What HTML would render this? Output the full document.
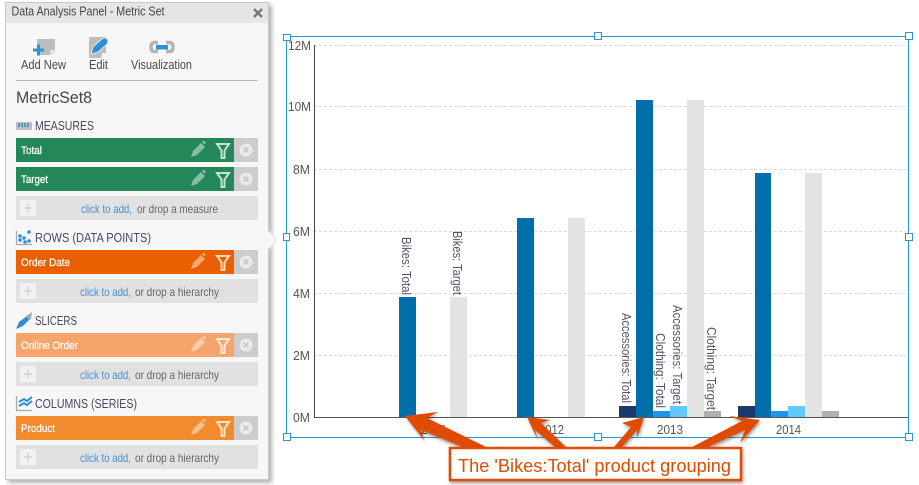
<!DOCTYPE html>
<html><head><meta charset="utf-8"><style>
html,body{margin:0;padding:0;background:#fff;width:919px;height:485px;overflow:hidden}
svg{display:block;position:absolute;left:0;top:0}
text{font-family:"Liberation Sans",sans-serif;font-size:12px;fill:#4a4a4a}
.r{font-size:11px;fill:#fff;stroke:#fff;stroke-width:.25px}
.b{fill:#4b8fcf;font-size:12px}
.g{fill:#666;font-size:12px}
.h{font-size:12.5px;fill:#484860}
.a{fill:#555;font-size:13px}
.l{fill:#555;font-size:12.5px}
.v{fill:#5a5068;font-size:12.5px}
</style></head><body>
<svg width="919" height="485" viewBox="0 0 919 485">
<defs>
<filter id="s" x="-10%" y="-10%" width="120%" height="120%"><feDropShadow dx="3" dy="3" stdDeviation="2" flood-color="#000" flood-opacity=".3"/></filter>
<filter id="s2" x="-10%" y="-20%" width="120%" height="140%"><feDropShadow dx="1" dy="2" stdDeviation="1.5" flood-color="#000" flood-opacity=".4"/></filter>
<g id="tools">
<path d="M191 157l2-6 8-8 4 4-8 8z" fill="#fff" fill-opacity=".45"/>
<path d="M202 142l1-1q1-.5 2 .5t.5 2l-1 1z" fill="#fff" fill-opacity=".45"/>
<path d="M217 144h12l-4.500 6.500v7.500h-3v-7.500z" fill="none" stroke="#fff" stroke-opacity=".75" stroke-width="2"/>
<rect x="234" y="138" width="24" height="24" fill="#ccc"/>
<circle cx="246" cy="150" r="6.500" fill="#e9e9e9"/>
<path d="M243.500 147.500l5 5m0-5l-5 5" stroke="#c4c4c4" stroke-width="1.300"/>
</g>
<g id="addrow">
<rect x="16" y="196" width="242" height="24" fill="#e1e1e1"/>
<rect x="20" y="200" width="16" height="16" fill="#f1f1f1"/>
<path d="M28 203.500v9m-4.500-4.500h9" stroke="#c8c8c8" stroke-width="1"/>
</g>
</defs>

<!-- Chart -->
<g stroke="#dcdcdc" stroke-width="1" stroke-dasharray="3 2">
<path d="M314 45.500H906M314 106.500H906M314 169.500H906M314 231.500H906M314 293.500H906M314 355.500H906"/>
</g>
<rect x="314" y="45" width="1" height="372" fill="#444"/>
<rect x="314" y="417" width="594" height="1" fill="#555"/>
<g>
<text class="a" lengthAdjust="spacingAndGlyphs" x="288" y="50" textLength="23">12M</text>
<text class="a" lengthAdjust="spacingAndGlyphs" x="288" y="111" textLength="23">10M</text>
<text class="a" lengthAdjust="spacingAndGlyphs" x="293" y="174" textLength="17">8M</text>
<text class="a" lengthAdjust="spacingAndGlyphs" x="293" y="236" textLength="17">6M</text>
<text class="a" lengthAdjust="spacingAndGlyphs" x="293" y="298" textLength="17">4M</text>
<text class="a" lengthAdjust="spacingAndGlyphs" x="293" y="360" textLength="17">2M</text>
<text class="a" lengthAdjust="spacingAndGlyphs" x="293" y="422" textLength="17">0M</text>
</g>
<g fill="#e3e3e3">
<rect x="450" y="297" width="17" height="120"/><rect x="568" y="218" width="17" height="199"/>
<rect x="687" y="100" width="17" height="317"/><rect x="805" y="173" width="17" height="244"/>
</g>
<g fill="#006eab">
<rect x="399" y="297" width="17" height="120"/><rect x="517" y="218" width="17" height="199"/>
<rect x="636" y="100" width="17" height="317"/><rect x="755" y="173" width="16" height="244"/>
</g>
<g fill="#1b3a6b"><rect x="619" y="406" width="17" height="11"/><rect x="738" y="406" width="17" height="11"/></g>
<g fill="#1a98ee"><rect x="653" y="411" width="17" height="6"/><rect x="771" y="411" width="17" height="6"/></g>
<g fill="#61c9ff"><rect x="670" y="406" width="17" height="11"/><rect x="788" y="406" width="17" height="11"/></g>
<g fill="#b0b0b0"><rect x="704" y="411" width="17" height="6"/><rect x="822" y="411" width="17" height="6"/></g>
<text class="l" lengthAdjust="spacingAndGlyphs" x="421" y="434" textLength="26">2011</text>
<text class="l" lengthAdjust="spacingAndGlyphs" x="539" y="434" textLength="25">2012</text>
<text class="l" lengthAdjust="spacingAndGlyphs" x="657" y="434" textLength="26">2013</text>
<text class="l" lengthAdjust="spacingAndGlyphs" x="776" y="434" textLength="25">2014</text>
<text class="v" lengthAdjust="spacingAndGlyphs" transform="translate(402,237) rotate(90)" textLength="58">Bikes: Total</text>
<text class="v" lengthAdjust="spacingAndGlyphs" transform="translate(453,231) rotate(90)" textLength="64">Bikes: Target</text>
<text class="v" lengthAdjust="spacingAndGlyphs" transform="translate(622,313) rotate(90)" textLength="90">Accessories: Total</text>
<text class="v" lengthAdjust="spacingAndGlyphs" transform="translate(656,333) rotate(90)" textLength="75">Clothing: Total</text>
<text class="v" lengthAdjust="spacingAndGlyphs" transform="translate(673,305) rotate(90)" textLength="99">Accessories: Target</text>
<text class="v" lengthAdjust="spacingAndGlyphs" transform="translate(707,327) rotate(90)" textLength="83">Clothing: Target</text>

<!-- Selection -->
<rect x="286.500" y="36.500" width="622" height="401" fill="none" stroke="#2a95d5" stroke-width="1"/>
<g fill="#fff" stroke="#2a95d5" stroke-width="1">
<rect x="283.500" y="34.500" width="7" height="6"/><rect x="594.500" y="32.500" width="7" height="7"/><rect x="905.500" y="32.500" width="7" height="7"/>
<rect x="283.500" y="233.500" width="6" height="7"/><rect x="905.500" y="233.500" width="7" height="7"/>
<rect x="283.500" y="433.500" width="7" height="7"/><rect x="594.500" y="433.500" width="7" height="7"/><rect x="905.500" y="433.500" width="7" height="7"/>
</g>

<!-- Panel -->
<rect x="5.500" y="2.500" width="263" height="477" fill="#f7f7f7" stroke="#c8c8c8" stroke-width="1" filter="url(#s)"/>
<path d="M268 231l9 9-9 9z" fill="#f7f7f7"/>
<path d="M269 231l8 9-8 9" fill="none" stroke="#e4e4e4"/>
<rect x="6" y="3" width="262" height="20" fill="#e6e6e6"/>
<text lengthAdjust="spacingAndGlyphs" x="11.500" y="15.500" textLength="153" style="font-size:12.5px;fill:#444">Data Analysis Panel - Metric Set</text>
<path d="M254 9l8 8m0-8l-8 8" stroke="#777" stroke-width="2.400"/>

<!-- toolbar icons -->
<path d="M37 39h18v12l-4 4H37z" fill="#bdbdbd"/><path d="M50 55l1-5h4z" fill="#f0f0f0"/>
<path d="M38.500 44.500v11m-5.500-5.500h11" stroke="#2a95d5" stroke-width="3"/>
<path d="M89 37h17v16l-5 5H89z" fill="#bdbdbd"/><path d="M101 58l1-5h4z" fill="#f0f0f0"/>
<path d="M91 54l2-7 9-8q3-2 5 0t0 5l-9 8z" fill="#2a8ed8" stroke="#f7f7f7" stroke-width=".8"/>
<path d="M158 42.500h-3.500q-3.500 0-3.500 4.500t3.500 4.500h3.500m8-9h3.500q3.500 0 3.500 4.500t-3.500 4.500h-3.500" fill="none" stroke="#b5b5b5" stroke-width="3.500"/>
<rect x="156" y="45" width="12" height="4.500" fill="#2a95d5"/>
<text lengthAdjust="spacingAndGlyphs" x="21" y="69" textLength="45" style="font-size:12.5px">Add New</text>
<text lengthAdjust="spacingAndGlyphs" x="89" y="69" textLength="19" style="font-size:12.5px">Edit</text>
<text lengthAdjust="spacingAndGlyphs" x="131" y="69" textLength="61" style="font-size:12.5px">Visualization</text>
<rect x="16" y="80" width="242" height="1" fill="#b9b9b9"/>
<text lengthAdjust="spacingAndGlyphs" x="16" y="103" textLength="76" style="font-size:17px;fill:#444">MetricSet8</text>

<!-- Section headers -->
<rect x="16" y="122" width="16" height="8" fill="#c0c0c0"/>
<path d="M19 123v4m3-4v4m3-4v4m3-4v4" stroke="#2a8ed8" stroke-width="1.500"/>
<text class="h" lengthAdjust="spacingAndGlyphs" x="35" y="130" textLength="59">MEASURES</text>
<g fill="#2a8ed8"><circle cx="20" cy="236" r="1.800"/><circle cx="24" cy="238" r="1.800"/><circle cx="29" cy="232" r="1.800"/><circle cx="20" cy="240" r="1.800"/><circle cx="25" cy="242" r="1.800"/><circle cx="29" cy="241" r="1.800"/></g>
<path d="M16.500 231v13.500H32" fill="none" stroke="#aaa" stroke-width="1.300"/>
<text class="h" lengthAdjust="spacingAndGlyphs" x="35" y="242" textLength="116">ROWS (DATA POINTS)</text>
<path d="M16 329l3-7 8-6 3 3-7 7z" fill="#2a8ed8"/><path d="M26 316l6-4-1 7-2 1z" fill="#a8a8a8"/>
<text class="h" lengthAdjust="spacingAndGlyphs" x="35" y="325" textLength="42">SLICERS</text>
<path d="M19 402l5-3 3 2 5-4m-13 9l5-3 3 2 5-4" fill="none" stroke="#2a8ed8" stroke-width="2"/>
<path d="M16.500 396v14.500H32" fill="none" stroke="#aaa" stroke-width="1.300"/>
<text class="h" lengthAdjust="spacingAndGlyphs" x="35" y="408" textLength="102">COLUMNS (SERIES)</text>

<!-- Rows -->
<rect x="16" y="138" width="218" height="24" fill="#24875a"/><use href="#tools"/>
<text class="r" lengthAdjust="spacingAndGlyphs" x="21" y="154" textLength="21">Total</text>
<rect x="16" y="167" width="218" height="24" fill="#24875a"/><use href="#tools" y="29"/>
<text class="r" lengthAdjust="spacingAndGlyphs" x="21" y="183" textLength="27">Target</text>
<use href="#addrow"/>
<text class="b" lengthAdjust="spacingAndGlyphs" x="81" y="213" textLength="51">click to add,</text><text class="g" lengthAdjust="spacingAndGlyphs" x="137" y="213" textLength="81">or drop a measure</text>

<rect x="16" y="250" width="218" height="24" fill="#ea6000"/><use href="#tools" y="112"/>
<text class="r" lengthAdjust="spacingAndGlyphs" x="21" y="266" textLength="49">Order Date</text>
<use href="#addrow" y="83"/>
<text class="b" lengthAdjust="spacingAndGlyphs" x="80" y="296" textLength="51">click to add,</text><text class="g" lengthAdjust="spacingAndGlyphs" x="135" y="296" textLength="84">or drop a hierarchy</text>

<rect x="16" y="333" width="218" height="24" fill="#f5a56c"/><use href="#tools" y="195"/>
<text class="r" lengthAdjust="spacingAndGlyphs" x="21" y="349" textLength="57">Online Order</text>
<use href="#addrow" y="166"/>
<text class="b" lengthAdjust="spacingAndGlyphs" x="80" y="379" textLength="51">click to add,</text><text class="g" lengthAdjust="spacingAndGlyphs" x="135" y="379" textLength="84">or drop a hierarchy</text>

<rect x="16" y="416" width="218" height="24" fill="#f28a2e"/><use href="#tools" y="278"/>
<text class="r" lengthAdjust="spacingAndGlyphs" x="21" y="432" textLength="34">Product</text>
<use href="#addrow" y="249"/>
<text class="b" lengthAdjust="spacingAndGlyphs" x="80" y="462" textLength="51">click to add,</text><text class="g" lengthAdjust="spacingAndGlyphs" x="135" y="462" textLength="84">or drop a hierarchy</text>

<!-- Callout -->
<g fill="#df4c00" filter="url(#s2)">
<path d="M405 416L438 412 427 418 486 447H462L421 430 424 440z"/>
<path d="M527 417L550 420 541 423 566 447H555L535 430 538 440z"/>
<path d="M644 417L637 438 637 430 622 447H614L631 427 622 423z"/>
<path d="M760 420L740 443 745 430 708 447H692L742 421 729 416z"/>
</g>
<rect x="450" y="448" width="291" height="32" fill="#fff" stroke="#df4c00" stroke-width="2.500" filter="url(#s2)"/>
<text lengthAdjust="spacingAndGlyphs" x="458" y="472" textLength="273" style="font-size:18.500px;fill:#df4c00">The 'Bikes:Total' product grouping</text>
</svg>
</body></html>
